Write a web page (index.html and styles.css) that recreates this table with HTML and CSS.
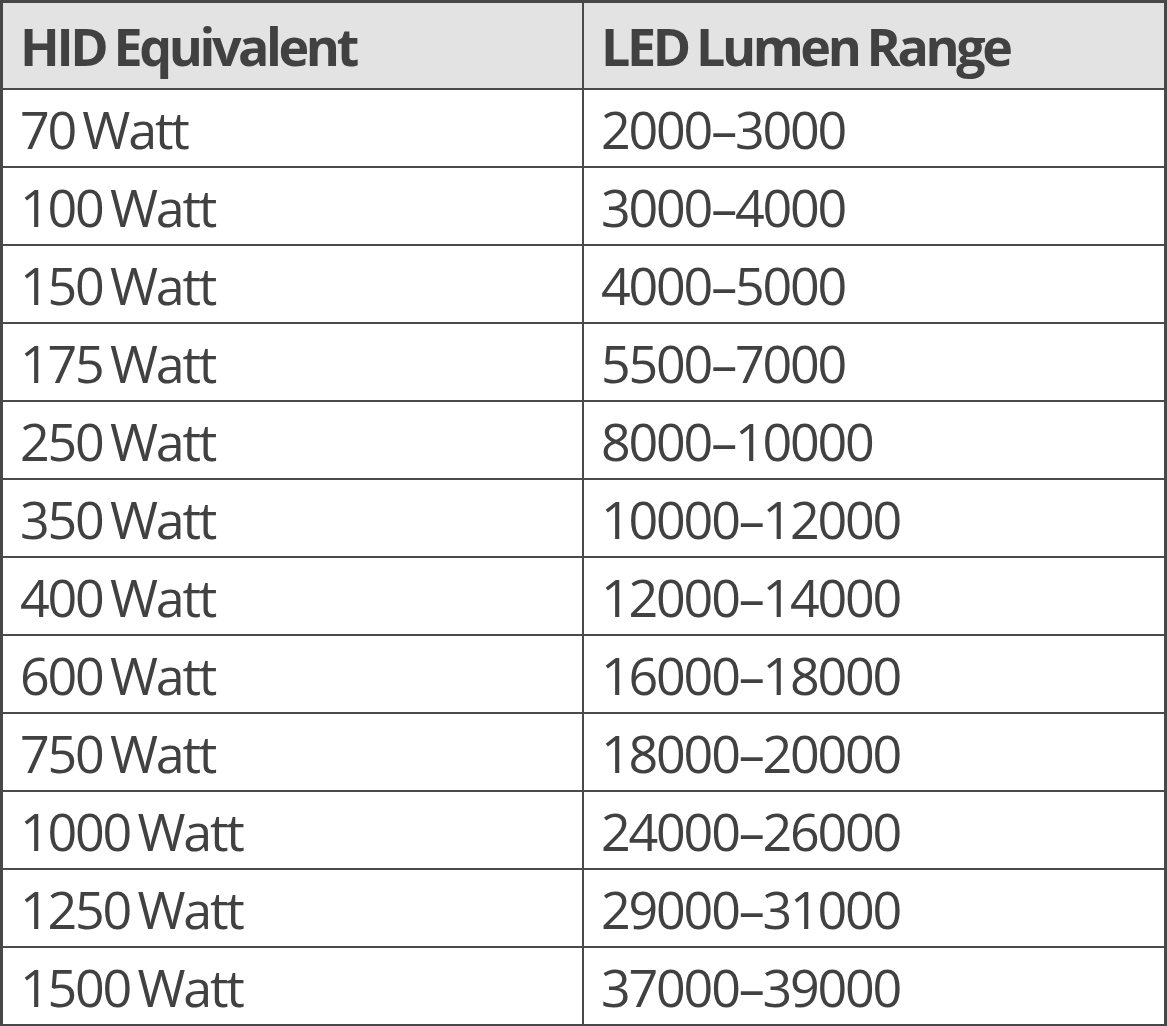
FILE: index.html
```html
<!DOCTYPE html>
<html>
<head>
<meta charset="utf-8">
<link rel="stylesheet" href="styles.css">
</head>
<body>
<div class="tbl">
  <div class="cell head c1">HID Equivalent</div><div class="cell head c2">LED Lumen Range</div>
  <div class="cell c1">70 Watt</div><div class="cell c2">2000–3000</div>
  <div class="cell c1">100 Watt</div><div class="cell c2">3000–4000</div>
  <div class="cell c1">150 Watt</div><div class="cell c2">4000–5000</div>
  <div class="cell c1">175 Watt</div><div class="cell c2">5500–7000</div>
  <div class="cell c1">250 Watt</div><div class="cell c2">8000–10000</div>
  <div class="cell c1">350 Watt</div><div class="cell c2">10000–12000</div>
  <div class="cell c1">400 Watt</div><div class="cell c2">12000–14000</div>
  <div class="cell c1">600 Watt</div><div class="cell c2">16000–18000</div>
  <div class="cell c1">750 Watt</div><div class="cell c2">18000–20000</div>
  <div class="cell c1">1000 Watt</div><div class="cell c2">24000–26000</div>
  <div class="cell c1">1250 Watt</div><div class="cell c2">29000–31000</div>
  <div class="cell c1 last">1500 Watt</div><div class="cell c2 last">37000–39000</div>
</div>
</body>
</html>
```
FILE: styles.css
```css
html, body {
  margin: 0;
  padding: 0;
  background: #ffffff;
}
.tbl {
  width: 1167px;
  box-sizing: border-box;
  border: 3px solid #474747;
  display: grid;
  grid-template-columns: 581px 1fr;
  grid-template-rows: 87px repeat(11, 78px) 76px;
  font-family: "Open Sans", "Noto Sans", sans-serif;
  color: #414141;
}
.cell {
  display: flex;
  align-items: center;
  padding-left: 17px;
  font-size: 52px;
  letter-spacing: -2.2px;
  word-spacing: -4px;
  border-bottom: 2px solid #4a4a4a;
  white-space: nowrap;
}
.c1 {
  border-right: 2px solid #4a4a4a;
}
.head {
  background: #e3e3e3;
  font-weight: 700;
  letter-spacing: -3.4px;
  word-spacing: -2px;
}
.last {
  border-bottom: none;
}
```
